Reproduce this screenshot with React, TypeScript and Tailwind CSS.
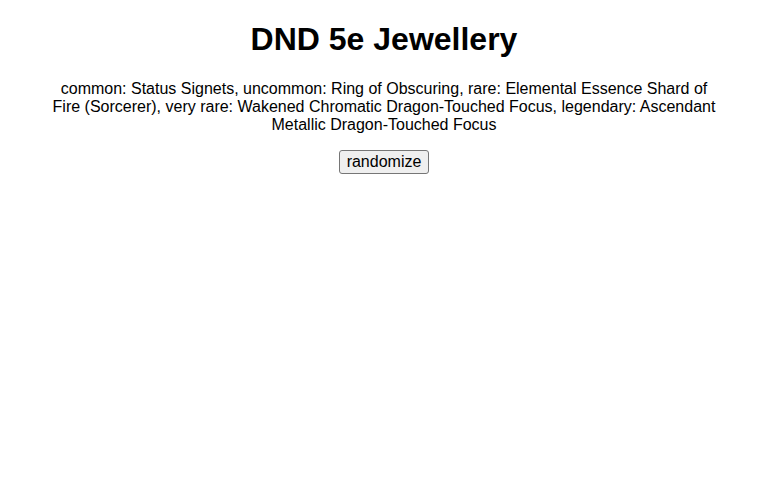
/**
 * DND 5e Jewellery
 *
 * Picks one random jewellery item per rarity tier
 */

import { useState } from 'react';

type Rarity = 'common' | 'uncommon' | 'rare' | 'very rare' | 'legendary';

const ITEMS: Record<Rarity, string[]> = {
  common: ['Status Signets', 'Ring of Mind Shielding', 'Pole of Collapsing'],
  uncommon: ['Ring of Obscuring', 'Ring of Jumping', 'Amulet of Proof against Detection'],
  rare: ['Elemental Essence Shard of Fire (Sorcerer)', 'Ring of Evasion', 'Periapt of Proof against Poison'],
  'very rare': ['Wakened Chromatic Dragon-Touched Focus', 'Ring of Regeneration', 'Amulet of the Planes'],
  legendary: ['Ascendant Metallic Dragon-Touched Focus', 'Ring of Three Wishes', 'Ring of Invisibility'],
};

const RARITIES = Object.keys(ITEMS) as Rarity[];

const pick = (list: string[]) => list[Math.floor(Math.random() * list.length)];

export default function App() {
  const [chosen, setChosen] = useState<Record<Rarity, string>>({
    common: 'Status Signets',
    uncommon: 'Ring of Obscuring',
    rare: 'Elemental Essence Shard of Fire (Sorcerer)',
    'very rare': 'Wakened Chromatic Dragon-Touched Focus',
    legendary: 'Ascendant Metallic Dragon-Touched Focus',
  });

  const randomize = () => {
    const next = {} as Record<Rarity, string>;
    RARITIES.forEach((r) => (next[r] = pick(ITEMS[r])));
    setChosen(next);
  };

  return (
    <div className="min-h-screen bg-white text-black text-center font-['Liberation_Sans',Arial,sans-serif] text-[16px] leading-[18px]">
      <h1 className="pt-[21px] text-[32px] leading-[37px] font-bold">DND 5e Jewellery</h1>

      {/* one line of "rarity: item" pairs */}
      <p className="mx-auto mt-[22px] max-w-[672px]">
        {RARITIES.map((r) => `${r}: ${chosen[r]}`).join(', ')}
      </p>

      <button
        onClick={randomize}
        className="mt-[16px] h-[24px] px-[7px] bg-[#efefef] border border-[#767676] rounded-[3px] text-[16px] leading-[18px] text-black hover:bg-[#e5e5e5]"
      >
        randomize
      </button>
    </div>
  );
}
